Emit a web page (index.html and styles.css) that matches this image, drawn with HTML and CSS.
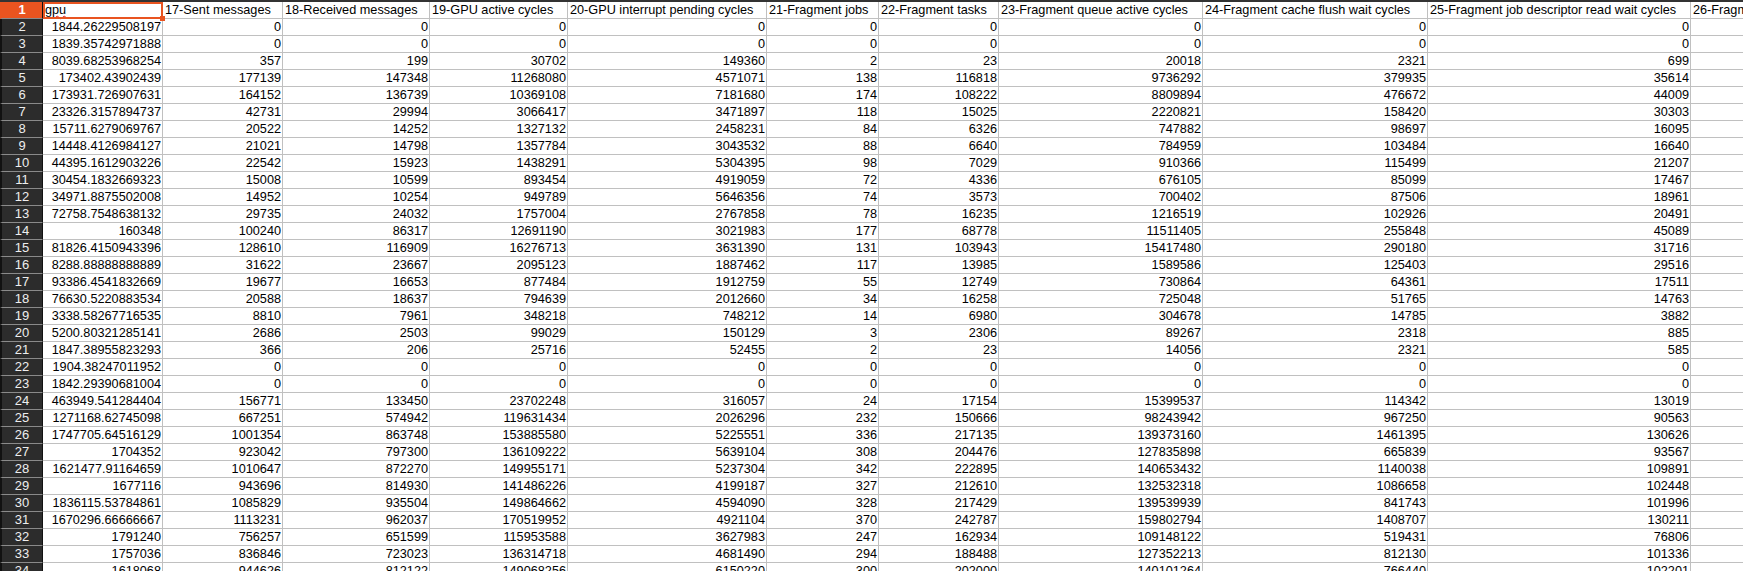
FILE: index.html
```html
<!DOCTYPE html>
<html lang="en">

<head>
  <meta charset="UTF-8">
  <title>gpu counters - Calc</title>
  <link rel="stylesheet" href="styles.css">
</head>

<body>
  <div class="sheet">
    <table class="grid">
      <colgroup>
        <col class="col-head">
        <col class="col-a">
        <col class="col-b">
        <col class="col-c">
        <col class="col-d">
        <col class="col-e">
        <col class="col-f">
        <col class="col-g">
        <col class="col-h">
        <col class="col-i">
        <col class="col-j">
        <col class="col-k">
      </colgroup>
      <tr class="title-row">
        <th class="row-num row-num--active">1</th>
        <td class="cell--selected"><span class="misspelt">gpu</span></td>
        <td>17-Sent messages</td>
        <td>18-Received messages</td>
        <td>19-GPU active cycles</td>
        <td>20-GPU interrupt pending cycles</td>
        <td>21-Fragment jobs</td>
        <td>22-Fragment tasks</td>
        <td>23-Fragment queue active cycles</td>
        <td>24-Fragment cache flush wait cycles</td>
        <td>25-Fragment job descriptor read wait cycles</td>
        <td>26-Fragment job</td>
      </tr>
      <tr><th class="row-num">2</th><td>1844.26229508197</td><td>0</td><td>0</td><td>0</td><td>0</td><td>0</td><td>0</td><td>0</td><td>0</td><td>0</td><td></td></tr>
      <tr><th class="row-num">3</th><td>1839.35742971888</td><td>0</td><td>0</td><td>0</td><td>0</td><td>0</td><td>0</td><td>0</td><td>0</td><td>0</td><td></td></tr>
      <tr><th class="row-num">4</th><td>8039.68253968254</td><td>357</td><td>199</td><td>30702</td><td>149360</td><td>2</td><td>23</td><td>20018</td><td>2321</td><td>699</td><td></td></tr>
      <tr><th class="row-num">5</th><td>173402.43902439</td><td>177139</td><td>147348</td><td>11268080</td><td>4571071</td><td>138</td><td>116818</td><td>9736292</td><td>379935</td><td>35614</td><td></td></tr>
      <tr><th class="row-num">6</th><td>173931.726907631</td><td>164152</td><td>136739</td><td>10369108</td><td>7181680</td><td>174</td><td>108222</td><td>8809894</td><td>476672</td><td>44009</td><td></td></tr>
      <tr><th class="row-num">7</th><td>23326.3157894737</td><td>42731</td><td>29994</td><td>3066417</td><td>3471897</td><td>118</td><td>15025</td><td>2220821</td><td>158420</td><td>30303</td><td></td></tr>
      <tr><th class="row-num">8</th><td>15711.6279069767</td><td>20522</td><td>14252</td><td>1327132</td><td>2458231</td><td>84</td><td>6326</td><td>747882</td><td>98697</td><td>16095</td><td></td></tr>
      <tr><th class="row-num">9</th><td>14448.4126984127</td><td>21021</td><td>14798</td><td>1357784</td><td>3043532</td><td>88</td><td>6640</td><td>784959</td><td>103484</td><td>16640</td><td></td></tr>
      <tr><th class="row-num">10</th><td>44395.1612903226</td><td>22542</td><td>15923</td><td>1438291</td><td>5304395</td><td>98</td><td>7029</td><td>910366</td><td>115499</td><td>21207</td><td></td></tr>
      <tr><th class="row-num">11</th><td>30454.1832669323</td><td>15008</td><td>10599</td><td>893454</td><td>4919059</td><td>72</td><td>4336</td><td>676105</td><td>85099</td><td>17467</td><td></td></tr>
      <tr><th class="row-num">12</th><td>34971.8875502008</td><td>14952</td><td>10254</td><td>949789</td><td>5646356</td><td>74</td><td>3573</td><td>700402</td><td>87506</td><td>18961</td><td></td></tr>
      <tr><th class="row-num">13</th><td>72758.7548638132</td><td>29735</td><td>24032</td><td>1757004</td><td>2767858</td><td>78</td><td>16235</td><td>1216519</td><td>102926</td><td>20491</td><td></td></tr>
      <tr><th class="row-num">14</th><td>160348</td><td>100240</td><td>86317</td><td>12691190</td><td>3021983</td><td>177</td><td>68778</td><td>11511405</td><td>255848</td><td>45089</td><td></td></tr>
      <tr><th class="row-num">15</th><td>81826.4150943396</td><td>128610</td><td>116909</td><td>16276713</td><td>3631390</td><td>131</td><td>103943</td><td>15417480</td><td>290180</td><td>31716</td><td></td></tr>
      <tr><th class="row-num">16</th><td>8288.88888888889</td><td>31622</td><td>23667</td><td>2095123</td><td>1887462</td><td>117</td><td>13985</td><td>1589586</td><td>125403</td><td>29516</td><td></td></tr>
      <tr><th class="row-num">17</th><td>93386.4541832669</td><td>19677</td><td>16653</td><td>877484</td><td>1912759</td><td>55</td><td>12749</td><td>730864</td><td>64361</td><td>17511</td><td></td></tr>
      <tr><th class="row-num">18</th><td>76630.5220883534</td><td>20588</td><td>18637</td><td>794639</td><td>2012660</td><td>34</td><td>16258</td><td>725048</td><td>51765</td><td>14763</td><td></td></tr>
      <tr><th class="row-num">19</th><td>3338.58267716535</td><td>8810</td><td>7961</td><td>348218</td><td>748212</td><td>14</td><td>6980</td><td>304678</td><td>14785</td><td>3882</td><td></td></tr>
      <tr><th class="row-num">20</th><td>5200.80321285141</td><td>2686</td><td>2503</td><td>99029</td><td>150129</td><td>3</td><td>2306</td><td>89267</td><td>2318</td><td>885</td><td></td></tr>
      <tr><th class="row-num">21</th><td>1847.38955823293</td><td>366</td><td>206</td><td>25716</td><td>52455</td><td>2</td><td>23</td><td>14056</td><td>2321</td><td>585</td><td></td></tr>
      <tr><th class="row-num">22</th><td>1904.38247011952</td><td>0</td><td>0</td><td>0</td><td>0</td><td>0</td><td>0</td><td>0</td><td>0</td><td>0</td><td></td></tr>
      <tr><th class="row-num">23</th><td>1842.29390681004</td><td>0</td><td>0</td><td>0</td><td>0</td><td>0</td><td>0</td><td>0</td><td>0</td><td>0</td><td></td></tr>
      <tr><th class="row-num">24</th><td>463949.541284404</td><td>156771</td><td>133450</td><td>23702248</td><td>316057</td><td>24</td><td>17154</td><td>15399537</td><td>114342</td><td>13019</td><td></td></tr>
      <tr><th class="row-num">25</th><td>1271168.62745098</td><td>667251</td><td>574942</td><td>119631434</td><td>2026296</td><td>232</td><td>150666</td><td>98243942</td><td>967250</td><td>90563</td><td></td></tr>
      <tr><th class="row-num">26</th><td>1747705.64516129</td><td>1001354</td><td>863748</td><td>153885580</td><td>5225551</td><td>336</td><td>217135</td><td>139373160</td><td>1461395</td><td>130626</td><td></td></tr>
      <tr><th class="row-num">27</th><td>1704352</td><td>923042</td><td>797300</td><td>136109222</td><td>5639104</td><td>308</td><td>204476</td><td>127835898</td><td>665839</td><td>93567</td><td></td></tr>
      <tr><th class="row-num">28</th><td>1621477.91164659</td><td>1010647</td><td>872270</td><td>149955171</td><td>5237304</td><td>342</td><td>222895</td><td>140653432</td><td>1140038</td><td>109891</td><td></td></tr>
      <tr><th class="row-num">29</th><td>1677116</td><td>943696</td><td>814930</td><td>141486226</td><td>4199187</td><td>327</td><td>212610</td><td>132532318</td><td>1086658</td><td>102448</td><td></td></tr>
      <tr><th class="row-num">30</th><td>1836115.53784861</td><td>1085829</td><td>935504</td><td>149864662</td><td>4594090</td><td>328</td><td>217429</td><td>139539939</td><td>841743</td><td>101996</td><td></td></tr>
      <tr><th class="row-num">31</th><td>1670296.66666667</td><td>1113231</td><td>962037</td><td>170519952</td><td>4921104</td><td>370</td><td>242787</td><td>159802794</td><td>1408707</td><td>130211</td><td></td></tr>
      <tr><th class="row-num">32</th><td>1791240</td><td>756257</td><td>651599</td><td>115953588</td><td>3627983</td><td>247</td><td>162934</td><td>109148122</td><td>519431</td><td>76806</td><td></td></tr>
      <tr><th class="row-num">33</th><td>1757036</td><td>836846</td><td>723023</td><td>136314718</td><td>4681490</td><td>294</td><td>188488</td><td>127352213</td><td>812130</td><td>101336</td><td></td></tr>
      <tr><th class="row-num">34</th><td>1618068</td><td>944626</td><td>812122</td><td>149068256</td><td>6150220</td><td>300</td><td>202000</td><td>140101264</td><td>766440</td><td>102201</td><td></td></tr>
    </table>
  </div>
</body>

</html>
```

FILE: styles.css
```css
* {
  box-sizing: border-box;
}

html,
body {
  margin: 0;
  height: 100%;
  overflow: hidden;
  background: #fff;
}

.sheet {
  height: 571px;
  overflow: hidden;
  border-top: 2px solid #333;
}

.grid {
  table-layout: fixed;
  width: 1900px;
  border-collapse: separate;
  border-spacing: 0;
  font-family: "Liberation Sans", Arial, sans-serif;
  font-size: 12.7px;
  color: #000;
}

.col-head { width: 43px; }
.col-a { width: 120px; }
.col-b { width: 120px; }
.col-c { width: 147px; }
.col-d { width: 138px; }
.col-e { width: 199px; }
.col-f { width: 112px; }
.col-g { width: 120px; }
.col-h { width: 204px; }
.col-i { width: 225px; }
.col-j { width: 263px; }
.col-k { width: 209px; }

tr {
  height: 17px;
}

td {
  height: 17px;
  padding: 0 1px 0 2px;
  line-height: 16px;
  text-align: right;
  white-space: nowrap;
  overflow: hidden;
  border-right: 1px solid #c0c0c0;
  border-bottom: 1px solid #c0c0c0;
}

.title-row td {
  text-align: left;
}

.row-num {
  padding: 0;
  font-size: 13px;
  font-weight: normal;
  line-height: 16px;
  text-align: center;
  color: #eee;
  background: #2c2c2c;
  border-left: 2px solid #111;
  border-bottom: 1px solid #8a8a8a;
  border-right: 1px solid #111;
}

.row-num--active {
  color: #fff;
  font-weight: bold;
  background: #e95420;
  border-left-color: #e95420;
}

.cell--selected {
  position: relative;
  overflow: visible;
}

.cell--selected::after {
  content: "";
  position: absolute;
  top: 0;
  left: 0;
  right: -1px;
  bottom: -1px;
  border: 2px solid #e95420;
}

.cell--selected::before {
  content: "";
  position: absolute;
  right: -3px;
  bottom: -3px;
  width: 5px;
  height: 5px;
  background: #e95420;
  z-index: 1;
}

.misspelt {
  text-decoration: underline wavy #d22;
  text-decoration-thickness: 1px;
}
```
